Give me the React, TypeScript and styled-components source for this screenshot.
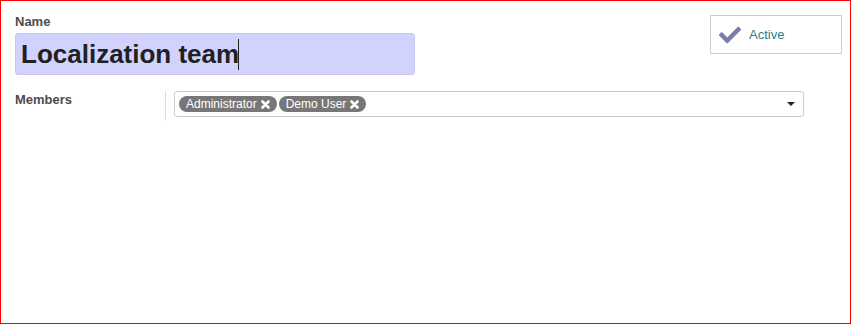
import { createGlobalStyle } from "styled-components";
import styled from "styled-components";
import { FaCheck } from "react-icons/fa";

const GlobalStyle = createGlobalStyle`
  html, body {
    margin: 0;
    padding: 0;
    background: #fff;
  }
  body {
    font-family: "Liberation Sans", Arial, sans-serif;
    color: #4c4c4c;
  }
`;

const members = ["Administrator", "Demo User"];

// heavy "x" like fa-times
const RemoveIcon = () => (
  <svg width="9" height="9" viewBox="0 0 9 9">
    <path d="M1.5 1.5 L7.5 7.5 M7.5 1.5 L1.5 7.5" stroke="#fff" strokeWidth="2.6" strokeLinecap="round" />
  </svg>
);

const App = () => {
  return (
    <>
      <GlobalStyle />
      <Sheet>
        <Header>
          <NameBlock>
            <Label>Name</Label>
            <NameInput>
              Localization team
              <Caret />
            </NameInput>
          </NameBlock>
          <ActiveButton>
            <FaCheck size={22} color="#7c7bad" />
            <ActiveText>Active</ActiveText>
          </ActiveButton>
        </Header>

        <FieldRow>
          <RowLabel>Members</RowLabel>
          <FieldCell>
            <TagsInput>
              {members.map((m) => (
                <Tag key={m}>
                  {m}
                  <RemoveIcon />
                </Tag>
              ))}
              <DropCaret />
            </TagsInput>
          </FieldCell>
        </FieldRow>
      </Sheet>
    </>
  );
};

export default App;

const Sheet = styled.div`
  box-sizing: border-box;
  width: 851px;
  height: 324px;
  border: 1px solid #ff0000;
  padding: 13px 8px 0 14px;
`;

const Header = styled.div`
  display: flex;
  justify-content: space-between;
  align-items: flex-start;
`;

const NameBlock = styled.div`
  display: flex;
  flex-direction: column;
`;

const Label = styled.div`
  font-size: 13px;
  font-weight: bold;
  line-height: 16px;
  color: #4c4c4c;
  margin-bottom: 3px;
`;

const NameInput = styled.div`
  box-sizing: border-box;
  width: 400px;
  height: 42px;
  display: flex;
  align-items: center;
  padding: 0 5px;
  background: #d2d2ff;
  border: 1px solid #c8c8e8;
  border-radius: 3px;
  font-size: 26px;
  font-weight: bold;
  color: #212121;
`;

const Caret = styled.span`
  display: inline-block;
  width: 1px;
  height: 31px;
  margin-left: -1px;
  background: #212121;
`;

const ActiveButton = styled.div`
  box-sizing: border-box;
  width: 132px;
  height: 39px;
  margin-top: 1px;
  display: flex;
  align-items: center;
  gap: 8px;
  padding-left: 8px;
  border: 1px solid #cccccc;
  background: #fff;
`;

const ActiveText = styled.span`
  font-size: 13px;
  color: #2a7f8e;
`;

const FieldRow = styled.div`
  display: grid;
  grid-template-columns: 150px 639px;
  margin-top: 16px;
`;

const RowLabel = styled.div`
  font-size: 13px;
  font-weight: bold;
  line-height: 16px;
  padding-top: 1px;
  color: #4c4c4c;
`;

const FieldCell = styled.div`
  border-left: 1px solid #dddddd;
  padding: 0 0 4px 8px;
`;

const TagsInput = styled.div`
  box-sizing: border-box;
  height: 26px;
  display: flex;
  align-items: center;
  gap: 2px;
  padding: 0 8px 0 4px;
  border: 1px solid #cccccc;
  border-radius: 3px;
`;

const Tag = styled.span`
  display: inline-flex;
  align-items: center;
  gap: 4px;
  height: 16px;
  padding: 0 7px 0 7px;
  border-radius: 8px;
  background: #777777;
  color: #fff;
  font-size: 12px;
`;

const DropCaret = styled.span`
  margin-left: auto;
  width: 0;
  height: 0;
  border-left: 4px solid transparent;
  border-right: 4px solid transparent;
  border-top: 4px solid #222;
`;
